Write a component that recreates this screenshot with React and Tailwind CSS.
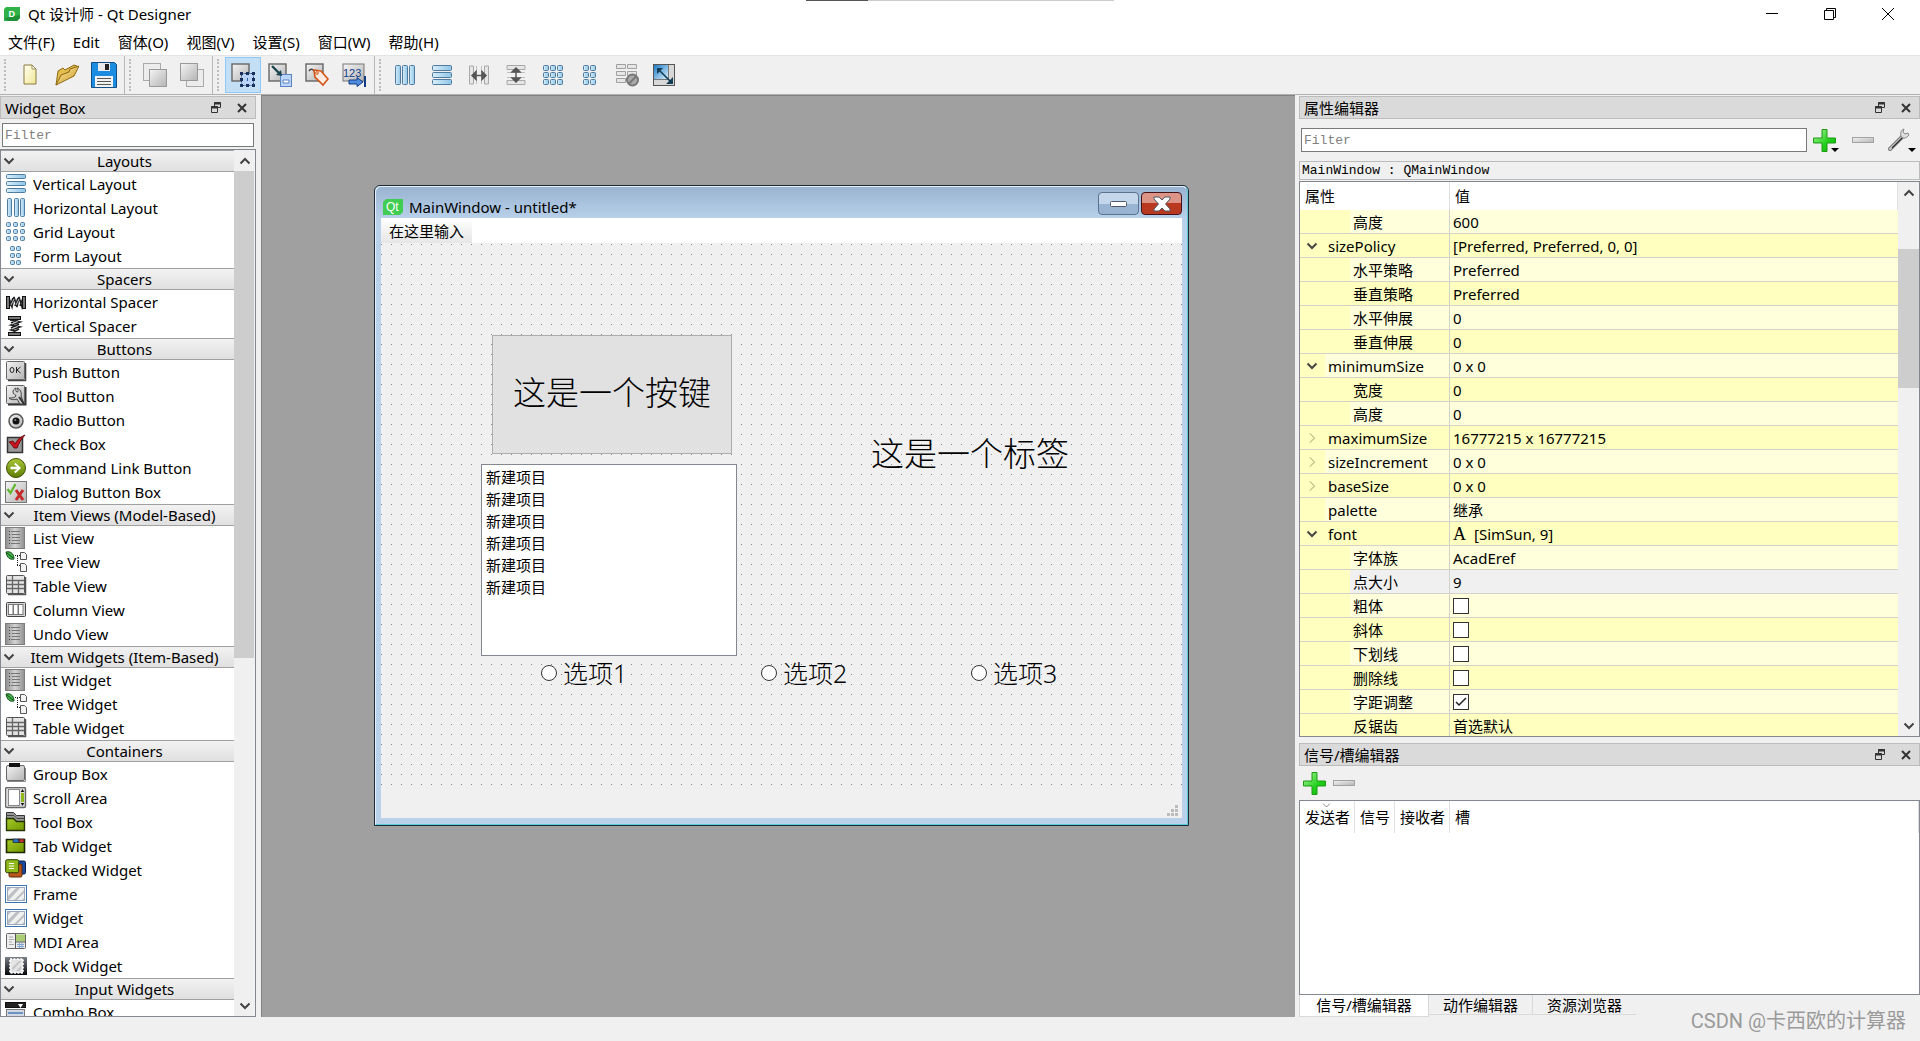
import React, { useState } from 'react';

const menus = ['文件(F)', 'Edit', '窗体(O)', '视图(V)', '设置(S)', '窗口(W)', '帮助(H)'];

const widgetGroups = [
    {
        title: 'Layouts',
        items: [
            ['vlayout', 'Vertical Layout'],
            ['hlayout', 'Horizontal Layout'],
            ['grid', 'Grid Layout'],
            ['form', 'Form Layout'],
        ],
    },
    {
        title: 'Spacers',
        items: [
            ['hspacer', 'Horizontal Spacer'],
            ['vspacer', 'Vertical Spacer'],
        ],
    },
    {
        title: 'Buttons',
        items: [
            ['push', 'Push Button'],
            ['tool', 'Tool Button'],
            ['radio', 'Radio Button'],
            ['check', 'Check Box'],
            ['command', 'Command Link Button'],
            ['dialog', 'Dialog Button Box'],
        ],
    },
    {
        title: 'Item Views (Model-Based)',
        items: [
            ['list', 'List View'],
            ['tree', 'Tree View'],
            ['table', 'Table View'],
            ['column', 'Column View'],
            ['list', 'Undo View'],
        ],
    },
    {
        title: 'Item Widgets (Item-Based)',
        items: [
            ['list', 'List Widget'],
            ['tree', 'Tree Widget'],
            ['table', 'Table Widget'],
        ],
    },
    {
        title: 'Containers',
        items: [
            ['group', 'Group Box'],
            ['scroll', 'Scroll Area'],
            ['toolbox', 'Tool Box'],
            ['tab', 'Tab Widget'],
            ['stacked', 'Stacked Widget'],
            ['frame', 'Frame'],
            ['frame', 'Widget'],
            ['mdi', 'MDI Area'],
            ['dock', 'Dock Widget'],
        ],
    },
    {
        title: 'Input Widgets',
        items: [['combo', 'Combo Box']],
    },
];

const properties = [
    { name: '高度', value: '600', child: true },
    { name: 'sizePolicy', value: '[Preferred, Preferred, 0, 0]', open: true },
    { name: '水平策略', value: 'Preferred', child: true },
    { name: '垂直策略', value: 'Preferred', child: true },
    { name: '水平伸展', value: '0', child: true },
    { name: '垂直伸展', value: '0', child: true },
    { name: 'minimumSize', value: '0 x 0', open: true },
    { name: '宽度', value: '0', child: true },
    { name: '高度', value: '0', child: true },
    { name: 'maximumSize', value: '16777215 x 16777215', open: false },
    { name: 'sizeIncrement', value: '0 x 0', open: false },
    { name: 'baseSize', value: '0 x 0', open: false },
    { name: 'palette', value: '继承' },
    { name: 'font', value: '[SimSun, 9]', open: true, font: true },
    { name: '字体族', value: 'AcadEref', child: true },
    { name: '点大小', value: '9', child: true, disabled: true },
    { name: '粗体', check: false, child: true },
    { name: '斜体', check: false, child: true },
    { name: '下划线', check: false, child: true },
    { name: '删除线', check: false, child: true },
    { name: '字距调整', check: true, child: true },
    { name: '反锯齿', value: '首选默认', child: true },
];

const Cells = ({ xs, ys, w = 5, h = 5 }) => (
    <g fill="url(#blue)" stroke="#4f7b9e">
        {ys.map((y) => xs.map((x) => <rect key={x + '-' + y} x={x} y={y} width={w} height={h} rx="1" />))}
    </g>
);

const ListIcon = (
    <>
        <rect x="0.5" y="0.5" width="19" height="21" fill="url(#greyH)" stroke="#7d7d7d" />
        <path d="M6 4.5h9M7 7.5h8M7 10.5h8M7 13.5h8M6 16.5h9" stroke="#777" />
        <path d="M4 4.5h1M4 7.5h1M4 10.5h1M4 13.5h1M4 16.5h1" stroke="#444" />
    </>
);

const icons = {
    vlayout: <Cells xs={[1.5]} ys={[1.5, 8.5, 15.5]} w={19} h={4} />,
    hlayout: <Cells xs={[2.5, 9.5, 15.5]} ys={[1.5]} w={4} h={18} />,
    grid: <Cells xs={[1.5, 8.5, 15.5]} ys={[1.5, 8.5, 15.5]} w={4} h={4} />,
    form: <Cells xs={[5.5, 11.5]} ys={[1.5, 8.5, 15.5]} w={4} h={4} />,
    hspacer: (
        <>
            <path d="M4 7l3 9 2-10 3 10 2-10 3 10 2-9M5 15l3-8M10 15l3-8M15 15l3-8" fill="none" stroke="#222" strokeWidth="1.6" />
            <path d="M6 14l3-6M11 14l3-6" stroke="#b8c4cc" />
            <rect x="1.5" y="5.5" width="3" height="12" fill="#777" stroke="#111" />
            <rect x="17.5" y="5.5" width="3" height="12" fill="#777" stroke="#111" />
        </>
    ),
    vspacer: (
        <>
            <path d="M5 5l10 2-9 3 9 2-9 3 9 3M14 4l-8 4M14 9l-8 4M14 14l-8 4" fill="none" stroke="#222" strokeWidth="1.6" />
            <path d="M13 6l-6 3M13 11l-6 3" stroke="#b8c4cc" />
            <rect x="3.5" y="1.5" width="12" height="3" fill="#777" stroke="#111" />
            <rect x="3.5" y="17.5" width="12" height="3" fill="#777" stroke="#111" />
        </>
    ),
    push: (
        <>
            <path d="M3 19.5h17.5V2" fill="none" stroke="#444" strokeWidth="1.6" />
            <rect x="1.5" y="0.5" width="18" height="18" rx="1" fill="url(#grey)" stroke="#666" />
            <ellipse cx="7" cy="9" rx="2" ry="2.5" fill="none" stroke="#222" />
            <path d="M11.5 6v6M15.5 6l-3.5 3 3.5 3" fill="none" stroke="#222" />
        </>
    ),
    tool: (
        <>
            <path d="M3 19.5h17.5V2" fill="none" stroke="#333" strokeWidth="2" />
            <rect x="1.5" y="0.5" width="18" height="18" rx="1" fill="url(#grey)" stroke="#666" />
            <path d="M12 3c3 1 5 4 4 8l3 8h-4l-3-5c-3 1-6 1-8-1 3 0 6 0 7-2 0-2-3-1-3-4 0-2 1-3 3-4 0 2-1 3 1 4 2 0 1-2 0-4z" fill="#d2d2d2" stroke="#444" />
            <path d="M14 12l5 7" stroke="#333" strokeWidth="2" />
        </>
    ),
    radio: (
        <>
            <circle cx="11" cy="12" r="7" fill="url(#grey)" stroke="#555" strokeWidth="1.5" />
            <circle cx="11" cy="12" r="3.5" fill="#111" />
            <circle cx="10.3" cy="11" r="1" fill="#889" />
        </>
    ),
    check: (
        <>
            <rect x="2.5" y="4.5" width="15" height="15" fill="#999" stroke="#333" strokeWidth="1.5" />
            <path d="M4 9l4-1 2 3c2-4 5-7 10-9-4 4-6 8-8 13H9c-1-2-3-4-5-6z" fill="#cc1420" stroke="#720d12" />
        </>
    ),
    command: (
        <>
            <circle cx="11" cy="11" r="9.5" fill="url(#olive)" stroke="#3f5200" />
            <path d="M5.5 9.8h6.500L9 7.300l1.500-1.500 5.500 5.200-5.500 5.200L9 14.700l3-2.500H5.500z" fill="#fff" />
        </>
    ),
    dialog: (
        <>
            <rect x="0.5" y="0.5" width="21" height="21" fill="url(#grey)" stroke="#777" />
            <path d="M2.5 8l3 4 5-9" fill="none" stroke="#61b82c" strokeWidth="2.2" />
            <path d="M11 9l7 10M18 9l-7 10" stroke="#c52a2a" strokeWidth="3" />
        </>
    ),
    list: ListIcon,
    tree: (
        <>
            <path d="M1 1c4-1 8 1 8 7-4 1-7-1-8-7z" fill="#43b04a" stroke="#164f1c" />
            <path d="M2 2l6 5" stroke="#164f1c" />
            <path d="M10 4.5h5M12.5 5v10M12 14.5h3" stroke="#222" strokeDasharray="1 1" fill="none" />
            <path d="M15.5 1.5h4l2 2v5h-6zM15.5 12.5h4l2 2v6h-6z" fill="#f4f4f4" stroke="#555" />
        </>
    ),
    table: (
        <>
            <path d="M3 19.5h17.5V2" fill="none" stroke="#555" strokeWidth="1.5" />
            <rect x="1.5" y="0.5" width="18" height="18" rx="1" fill="#e4e4e4" stroke="#555" />
            <path d="M2 5.5h17M2 9.5h17M2 13.5h17M7.5 1v17M13.5 6v12" stroke="#666" strokeWidth="1.3" />
        </>
    ),
    column: (
        <>
            <rect x="1.5" y="3.5" width="19" height="14" rx="1" fill="#d6d6d6" stroke="#444" />
            <rect x="3.5" y="5.5" width="4.5" height="10" fill="#fff" stroke="#777" />
            <rect x="8.5" y="5.5" width="4.5" height="10" fill="#fff" stroke="#777" />
            <rect x="13.5" y="5.5" width="4.5" height="10" fill="#fff" stroke="#777" />
        </>
    ),
    group: (
        <>
            <rect x="1.5" y="2.5" width="18" height="15" rx="1.5" fill="url(#grey)" stroke="#666" />
            <path d="M2 18.5h18.5V5" fill="none" stroke="#888" />
            <rect x="4" y="0" width="11" height="4" fill="#111" />
        </>
    ),
    scroll: (
        <>
            <rect x="0.5" y="0.5" width="20" height="20" rx="1.5" fill="#ddd" stroke="#666" strokeWidth="1.4" />
            <rect x="3.5" y="2.5" width="11" height="16" fill="#fff" stroke="#888" />
            <rect x="16" y="6" width="3" height="9" fill="#8fb81c" />
            <path d="M15.8 5L17.5 2 19.2 5zM15.8 16l1.7 3 1.7-3z" fill="#111" />
        </>
    ),
    toolbox: (
        <>
            <path d="M1.5 19.5V1.500h7l3 3h8v15z" fill="#999" stroke="#333" />
            <path d="M2 4.5h7l3 3h7" fill="none" stroke="#444" />
            <path d="M1.5 19.5v-12h7l3 3h8v9z" fill="url(#lime)" stroke="#253300" strokeWidth="1.4" />
        </>
    ),
    tab: (
        <>
            <path d="M1.5 4.5h18v13h-18z" fill="url(#lime)" stroke="#1d2800" strokeWidth="1.6" />
            <rect x="8" y="4" width="6" height="3.5" fill="#2b71c7" stroke="#111" strokeWidth="0.6" />
            <rect x="14" y="4" width="5" height="3.5" fill="#b33" stroke="#111" strokeWidth="0.6" />
        </>
    ),
    stacked: (
        <>
            <rect x="9" y="2" width="11.5" height="13" rx="1.5" fill="#174aa0" stroke="#0c1b44" />
            <rect x="4" y="5" width="13" height="13" rx="1.5" fill="#b9561a" stroke="#5b2506" />
            <rect x="0.7" y="0.7" width="13" height="13" rx="1.5" fill="#8fb81c" stroke="#2e3d00" />
            <path d="M4 4.5h5M4 7h5M4 9.5h5" stroke="#fff" />
        </>
    ),
    frame: (
        <>
            <rect x="0.5" y="2.5" width="21" height="17" fill="#fff" stroke="#3c74b0" />
            <rect x="2.5" y="4.5" width="17" height="13" fill="#f1f1f1" stroke="#9ab" />
            <path d="M3 13l8-8h4L4 17H3zM9 17L19 7v3l-7 7zM3 8l3-3H3zM17 17l2-2v2z" fill="#bcbfc3" />
        </>
    ),
    mdi: (
        <>
            <rect x="1.5" y="2.5" width="19" height="15" rx="1" fill="#eee" stroke="#666" />
            <rect x="11" y="3.5" width="9" height="7" fill="#a9cc75" />
            <path d="M4 6h4M4 8.5h5M4 11h3M4 13.5h5" stroke="#aaa" />
            <path d="M10.5 3v14M10.5 11h10" stroke="#555" />
            <path d="M12 13.5h7M12 15.5h7M14.5 12v5M17 12v5" stroke="#7fa5d0" />
        </>
    ),
    dock: (
        <>
            <rect width="22" height="18" y="2" fill="url(#dark)" />
            <rect x="5" y="4" width="13" height="14" fill="#e4e4e4" stroke="#fff" strokeWidth="1.6" strokeDasharray="2 1.4" />
            <path d="M7 13l7-7h2l-8 9zM11 16l5-5v3l-2 2z" fill="#c2c2c2" />
        </>
    ),
    combo: (
        <>
            <rect x="0.5" y="1.5" width="20" height="5" fill="#222" stroke="#111" />
            <path d="M13 3h5l-2.5 4z" fill="#fff" />
            <rect x="1.5" y="8.5" width="18" height="12" fill="#cfd8e4" stroke="#777" />
            <path d="M3 12h15M3 16h15" stroke="#6d92bf" strokeWidth="2" />
        </>
    ),

    newForm: (
        <>
            <path d="M6 2h8l4 4v15H6z" fill="url(#paper)" stroke="#8a7b3c" />
            <path d="M14 2v4h4z" fill="#fff" stroke="#8a7b3c" strokeWidth="0.8" />
        </>
    ),
    open: (
        <>
            <path d="M1 22L3 8l5-3 2 2 9-5 3 1-1 5z" fill="#e3bd4d" stroke="#8f6a14" />
            <path d="M4 16L19 4l2 1-2 8z" fill="#fdf6cf" stroke="#a5812c" strokeWidth="0.7" />
            <path d="M1 22l5-10 8-3 1-3 9-3-5 10z" fill="url(#folder)" stroke="#8f6a14" />
        </>
    ),
    save: (
        <>
            <path d="M0.5 0.5h23l2 2v23h-25z" fill="#1b8ce0" stroke="#0f4f86" />
            <path d="M7 1h12v8H7z" fill="#e8eaec" />
            <rect x="14" y="2" width="4" height="6" fill="#222" />
            <path d="M4 14h18v11H4z" fill="#f2f2f2" />
            <path d="M6 16.5h14M6 19.5h14M6 22.5h14" stroke="#555" />
        </>
    ),
    raise: (
        <g stroke="#a9a9a9">
            <rect x="0.5" y="0.5" width="17" height="17" fill="#ececec" />
            <rect x="6.5" y="6.5" width="17" height="17" fill="url(#grey)" stroke="#999" />
        </g>
    ),
    lower: (
        <g stroke="#a9a9a9">
            <rect x="6.5" y="6.5" width="17" height="17" fill="#ececec" />
            <rect x="0.5" y="0.5" width="17" height="17" fill="url(#grey)" stroke="#999" />
        </g>
    ),
    editWidgets: (
        <>
            <rect x="1" y="1" width="17" height="17" fill="url(#grey)" stroke="#666" strokeWidth="1.4" />
            <rect x="10.5" y="10.5" width="12" height="12" fill="#b9d2f5" stroke="#2c4a80" strokeDasharray="2 1" />
            <path d="M9 9h3v3H9zM15 9h3v3h-3zM21 9h3v3h-3zM9 15h3v3H9zM21 15h3v3h-3zM9 21h3v3H9zM15 21h3v3h-3zM21 21h3v3h-3z" fill="#17305e" />
            <path d="M16 15h1v3h-1z" fill="#2c5fc0" />
        </>
    ),
    editSignals: (
        <>
            <rect x="1" y="1" width="17" height="17" fill="url(#grey)" stroke="#666" strokeWidth="1.4" />
            <rect x="12.5" y="11.5" width="11" height="12" fill="#bcd5fa" stroke="#5a82c0" />
            <path d="M15 17h6v3h-6z" fill="#fff" stroke="#5a82c0" />
            <path d="M4 3l8 8" stroke="#1c4550" strokeWidth="2.4" />
            <path d="M14 13l-6-1 5-5z" fill="#1c4550" />
        </>
    ),
    editBuddies: (
        <>
            <rect x="1" y="1" width="17" height="17" fill="url(#grey)" stroke="#666" strokeWidth="1.4" />
            <path d="M4 8c2-3 4-2 7 2" stroke="#444" fill="none" strokeWidth="1.5" />
            <path d="M9 7l7 1 7 8-5 6-8-8z" fill="#fbeadd" stroke="#d25417" strokeWidth="1.6" />
            <circle cx="12" cy="10" r="1.3" fill="#fff" stroke="#d25417" />
        </>
    ),
    editTabs: (
        <>
            <rect x="1" y="1" width="21" height="17" fill="url(#grey)" stroke="#777" />
            <text x="1" y="14" fontSize="11" fill="#12408a" fontFamily="Liberation Sans">123</text>
            <path d="M7 17h8v-2.500l6 4.500-6 4.500V21H7z" fill="#4e8ce0" stroke="#123c86" />
            <path d="M23 13v11" stroke="#123c86" strokeWidth="2" />
        </>
    ),
    layoutH: <Cells xs={[2.5, 9.5, 16.5]} ys={[2.5]} h={19} />,
    layoutV: <Cells xs={[2.5]} ys={[2.5, 9.5, 16.5]} w={19} />,
    splitH: (
        <>
            <path d="M2.5 3h4v18h-4zM17.5 3h4v18h-4z" fill="#e6e6e6" stroke="#a8a8a8" />
            <path d="M9.5 3v18M14.5 3v18" stroke="#c0c0c0" />
            <path d="M5 12.5h14M5 12.5l4-4v8zM19 12.5l-4-4v8z" fill="#555" stroke="#555" strokeWidth="1.5" />
        </>
    ),
    splitV: (
        <>
            <path d="M3 2.5h18v4H3zM3 17.5h18v4H3z" fill="#e6e6e6" stroke="#a8a8a8" />
            <path d="M3 9.5h18M3 14.5h18" stroke="#c0c0c0" />
            <path d="M12 5v14M12 5L8 9h8zM12 19l-4-4h8z" fill="#555" stroke="#555" strokeWidth="1.5" />
        </>
    ),
    layoutGrid: <Cells xs={[2.5, 9.5, 16.5]} ys={[2.5, 9.5, 16.5]} />,
    layoutForm: <Cells xs={[5.5, 12.5]} ys={[2.5, 9.5, 16.5]} />,
    breakLayout: (
        <>
            <path d="M1.5 1.5h9v4h-9zM12.5 1.5h9v4h-9zM1.5 8.5h9v4h-9zM12.5 8.5h9v4h-9zM1.5 15.5h9v4h-9z" fill="#e6e6e6" stroke="#a0a0a0" />
            <circle cx="17.5" cy="17" r="5.5" fill="#aaa" stroke="#777" strokeWidth="2" />
            <path d="M14 20.5l7-7" stroke="#777" strokeWidth="2" />
        </>
    ),
    adjust: (
        <>
            <rect x="1.5" y="1.5" width="21" height="21" fill="#d8d8d8" stroke="#555" />
            <rect x="2" y="2" width="14" height="14" fill="url(#adjustFill)" />
            <path d="M16.5 2v14.5H2" fill="none" stroke="#777" />
            <path d="M6 6l12 12" stroke="#123d54" strokeWidth="1.600" />
            <path d="M5 5h6l-6 6zM21 21h-7l7-7z" fill="#123d54" />
        </>
    ),
    plus: (
        <path d="M9 0.5h5V9h8.500v5H14v8.500H9V14H0.5V9H9z" fill="url(#green)" stroke="#1e9a14" />
    ),
    minus: <rect x="1.5" y="9.5" width="21" height="5" fill="url(#grey)" stroke="#a2a2a2" />,
    wrench: (
        <>
            <path d="M3 21L15 9" stroke="#777" strokeWidth="4" strokeLinecap="round" />
            <path d="M3 21L15 9" stroke="#ccc" strokeWidth="2" strokeLinecap="round" />
            <path d="M5 20L16 9" stroke="#333" strokeWidth="1.3" />
            <path d="M17 1c-3 1-4 4-3 7s5 3 8-1l-1-2-3 1-2-2z" fill="#ddd" stroke="#888" />
        </>
    ),
};

const Icon = ({ name, size = 22, className = '' }) => (
    <svg width={size} height={size} viewBox={`0 0 ${size} ${size}`} className={`shrink-0 ${className}`} fill="none" aria-hidden="true">
        {icons[name]}
    </svg>
);

// shared gradients, referenced by id from every icon
const Gradients = () => (
    <svg width="0" height="0" className="absolute" aria-hidden="true">
        <defs>
            <linearGradient id="blue" x2="1" y2="0"><stop stopColor="#d9eefa" /><stop offset="1" stopColor="#8fc6e8" /></linearGradient>
            <linearGradient id="grey" x2="1" y2="1"><stop stopColor="#f4f4f4" /><stop offset="1" stopColor="#b4b4b4" /></linearGradient>
            <linearGradient id="greyH" x2="1" y2="0"><stop stopColor="#8c8c8c" /><stop offset=".5" stopColor="#d4d4d4" /><stop offset="1" stopColor="#8f8f8f" /></linearGradient>
            <linearGradient id="olive" x2="0" y2="1"><stop stopColor="#a9c637" /><stop offset="1" stopColor="#5f7d06" /></linearGradient>
            <linearGradient id="lime" x2="1" y2="1"><stop stopColor="#a6c92a" /><stop offset="1" stopColor="#6f9800" /></linearGradient>
            <linearGradient id="dark" x2="0" y2="1"><stop stopColor="#7a8089" /><stop offset="1" stopColor="#050709" /></linearGradient>
            <linearGradient id="paper" x2="1" y2="1"><stop stopColor="#fffef2" /><stop offset="1" stopColor="#f1e694" /></linearGradient>
            <linearGradient id="folder" x2="1" y2="1"><stop stopColor="#fbe79c" /><stop offset="1" stopColor="#cf9b2b" /></linearGradient>
            <linearGradient id="green" x2="1" y2="1"><stop stopColor="#b4f5a0" /><stop offset=".6" stopColor="#1fd01a" /><stop offset="1" stopColor="#0cae0c" /></linearGradient>
            <linearGradient id="adjustFill" x2="1" y2="1"><stop stopColor="#1c7cc4" /><stop offset="1" stopColor="#d8eefc" /></linearGradient>
        </defs>
    </svg>
);

const Chevron = ({ dir = 'down', className = '', color = '#444', size = 12, stroke = 2 }) => {
    const paths = { down: 'M1.5 3.5L6 8l4.5-4.5', up: 'M1.5 8.5L6 4l4.5 4.5', right: 'M4 1.5L8.5 6 4 10.5' };
    return (
        <svg width={size} height={size} viewBox="0 0 12 12" className={`shrink-0 ${className}`} aria-hidden="true">
            <path d={paths[dir]} fill="none" stroke={color} strokeWidth={stroke} />
        </svg>
    );
};

const ToolButton = ({ icon, size = 24, label, active }) => (
    <button
        type="button"
        aria-label={label}
        className={`w-9 h-9 flex items-center justify-center border ${active ? 'bg-[#c2dff5] border-[#90c8f6]' : 'border-transparent'}`}
    >
        <Icon name={icon} size={size} />
    </button>
);

const ToolGroup = ({ children, last }) => (
    <div className={`flex items-center gap-px pl-1 pr-0.5 ${last ? '' : 'border-r border-[#b8b8b8]'}`}>
        <div className="w-0 h-8 border-l-2 border-dotted border-[#bdbdbd] mr-[5px]"></div>
        {children}
    </div>
);

const DockTitle = ({ title }) => (
    <div className="h-[23px] shrink-0 flex items-center pl-1 pr-2 bg-[#dadada] border border-[#bcbcbc]">
        <h2 className="flex-1">{title}</h2>
        <button type="button" aria-label="Float" className="mr-4">
            <svg width="10" height="11" viewBox="0 0 10 11" fill="none">
                <path d="M3.5 4V.5h6v5H7" stroke="#333" />
                <path d="M3 1.5h7" stroke="#333" strokeWidth="2" />
                <path d="M.5 4.5h6v6h-6z" stroke="#333" />
                <path d="M0 5.5h7" stroke="#333" strokeWidth="2" />
            </svg>
        </button>
        <button type="button" aria-label="Close">
            <svg width="10" height="10" viewBox="0 0 10 10">
                <path d="M1 1l8 8M9 1L1 9" stroke="#333" strokeWidth="2" />
            </svg>
        </button>
    </div>
);

const ScrollBar = ({ children }) => (
    <div className="w-[21px] shrink-0 flex flex-col bg-[#f0f0f0]">
        <button type="button" aria-label="Scroll up" className="h-[21px] flex items-center justify-center">
            <Chevron dir="up" />
        </button>
        <div className="flex-1">{children}</div>
        <button type="button" aria-label="Scroll down" className="h-5 flex items-center justify-center">
            <Chevron />
        </button>
    </div>
);

const TitleBar = () => (
    <div className="h-7 flex items-center pl-1 relative">
        <svg width="16" height="16" viewBox="0 0 16 16" aria-hidden="true">
            <path d="M2 1h14v11l-3 3H0V3z" fill="#2fb348" />
            <path d="M0 12l4 3h9l3-3v-3z" fill="#1f9139" />
            <text x="4.5" y="11" fontSize="9" fontWeight="700" fill="#fff" fontFamily="Liberation Sans">D</text>
        </svg>
        <h1 className="ml-2 flex-1">Qt 设计师 - Qt Designer</h1>
        <div className="absolute top-0 left-[42%] w-[16%] h-px flex">
            <div className="w-1/5 bg-[#555]"></div>
            <div className="flex-1 bg-[#ccc]"></div>
        </div>
        <div className="flex gap-3 pr-[9px]">
            <button type="button" aria-label="Minimize" className="w-[46px] h-7 flex items-center justify-center">
                <svg width="12" height="12"><path d="M0 5.5h12" stroke="#000" /></svg>
            </button>
            <button type="button" aria-label="Restore" className="w-[46px] h-7 flex items-center justify-center">
                <svg width="12" height="12" fill="none" stroke="#000"><path d="M.5 2.5h9v9h-9zM2.5 2.5v-2h9v9h-2" /></svg>
            </button>
            <button type="button" aria-label="Close" className="w-[46px] h-7 flex items-center justify-center">
                <svg width="12" height="12"><path d="M0 0l12 12M12 0L0 12" stroke="#000" /></svg>
            </button>
        </div>
    </div>
);

const Toolbar = () => (
    <div className="h-10 shrink-0 flex border-t border-b border-t-[#e4e4e4] border-b-[#b0b0b0]">
        <ToolGroup>
            <ToolButton icon="newForm" label="New" />
            <ToolButton icon="open" label="Open" />
            <ToolButton icon="save" label="Save" size={26} />
        </ToolGroup>
        <ToolGroup>
            <ToolButton icon="raise" label="Bring to front" />
            <ToolButton icon="lower" label="Send to back" />
        </ToolGroup>
        <ToolGroup>
            <ToolButton icon="editWidgets" label="Edit widgets" active />
            <ToolButton icon="editSignals" label="Edit signals and slots" />
            <ToolButton icon="editBuddies" label="Edit buddies" />
            <ToolButton icon="editTabs" label="Edit tab order" />
        </ToolGroup>
        <ToolGroup last>
            <ToolButton icon="layoutH" label="Lay out horizontally" />
            <ToolButton icon="layoutV" label="Lay out vertically" />
            <ToolButton icon="splitH" label="Horizontal splitter" />
            <ToolButton icon="splitV" label="Vertical splitter" />
            <ToolButton icon="layoutGrid" label="Lay out in a grid" />
            <ToolButton icon="layoutForm" label="Lay out in a form" />
            <ToolButton icon="breakLayout" label="Break layout" />
            <ToolButton icon="adjust" label="Adjust size" />
        </ToolGroup>
    </div>
);

const WidgetBox = () => {
    const [closed, setClosed] = useState({});

    return (
        <aside className="w-64 shrink-0 flex flex-col">
            <DockTitle title="Widget Box" />
            <div className="px-0.5 pt-1 pb-0.5">
                <input
                    type="text"
                    aria-label="Filter widgets"
                    placeholder="Filter"
                    className="block w-full h-6 px-0.5 bg-white border border-[#7a7a7a] placeholder:text-[#808080] font-['Liberation_Mono',monospace] text-[13px]"
                />
            </div>
            <div className="flex-1 min-h-0 flex bg-white border border-[#828790]">
                <div className="flex-1 overflow-hidden">
                    {widgetGroups.map((group) => (
                        <section key={group.title}>
                            <button
                                type="button"
                                onClick={() => setClosed({ ...closed, [group.title]: !closed[group.title] })}
                                className="w-full h-[22px] flex items-center pl-0.5 bg-linear-to-b from-[#f2f2f2] to-[#e0e0e0] border-t border-b border-[#a0a0a0]"
                            >
                                <Chevron dir={closed[group.title] ? 'right' : 'down'} />
                                <span className="flex-1 text-center whitespace-nowrap">{group.title}</span>
                            </button>
                            {!closed[group.title] && (
                                <ul>
                                    {group.items.map(([icon, name]) => (
                                        <li key={name} className="h-6 flex items-center gap-1.5 pl-1 whitespace-nowrap">
                                            <Icon name={icon} />
                                            <span>{name}</span>
                                        </li>
                                    ))}
                                </ul>
                            )}
                        </section>
                    ))}
                </div>
                <ScrollBar>
                    <div className="h-[59%] mr-px bg-[#cdcdcd]"></div>
                </ScrollBar>
            </div>
        </aside>
    );
};

const RadioOption = ({ label, className }) => (
    <label className={`absolute flex items-center gap-1.5 text-[25px] leading-8 font-light ${className}`}>
        <input type="radio" name="option" className="appearance-none w-4 h-4 rounded-full bg-white border border-[#333] checked:border-4" />
        {label}
    </label>
);

const FormWindow = () => (
    <div className="absolute left-28 top-[89px] w-[815px] border border-[#1d2b36] rounded-t-md bg-[#b9d1ea]">
        <div className="border-l border-t border-r border-b border-t-[#e6f0fa] border-l-[#e6f0fa] border-r-[#5cc9d6] border-b-[#5cc9d6] rounded-t-md px-[5px] pb-1.5 bg-linear-to-b from-[#99b4d1] to-[#b9d1ea] to-[32px]">
            <div className="h-[31px] flex items-start">
                <svg width="20" height="16" viewBox="0 0 20 16" className="mt-3 ml-0.5" aria-hidden="true">
                    <path d="M3 0h17v13l-3 3H0V3z" fill="#41cd52" />
                    <text x="3" y="12" fontSize="12" fill="#fff" fontFamily="Liberation Sans">Qt</text>
                </svg>
                <span className="flex-1 ml-1.5 mt-2.5">MainWindow - untitled*</span>
                <button type="button" aria-label="Minimize form" className="mt-[5px] w-[41px] h-[23px] flex items-center justify-center border border-[#5a7391] rounded-sm bg-linear-to-b from-[#c3d6ea] from-50% to-[#98b4d2] to-50%">
                    <svg width="17" height="6"><rect x=".5" y=".5" width="16" height="5" rx="1" fill="#fff" stroke="#535666" /></svg>
                </button>
                <button type="button" aria-label="Close form" className="mt-[5px] ml-0.5 w-[41px] h-[23px] flex items-center justify-center border border-[#42131a] rounded-sm bg-linear-to-b from-[#dc9487] from-45% to-[#b8391f] to-50%">
                    <svg width="18" height="16" viewBox="0 0 18 16">
                        <path d="M1 1h5l3 3 3-3h5v2l-4.5 5 4.5 5v2h-5l-3-3-3 3H1v-2l4.5-5L1 3z" fill="#fff" stroke="#535666" />
                    </svg>
                </button>
            </div>
            <div className="h-[25px] flex bg-white">
                <button type="button" className="px-2 bg-linear-to-b from-white to-[#e6e6e6]">在这里输入</button>
            </div>
            <div className="relative h-[575px] bg-[#f0f0f0]">
                <svg width="100%" height="545" className="block" aria-hidden="true">
                    <defs>
                        <pattern id="dots" width="10" height="10" patternUnits="userSpaceOnUse">
                            <rect x="0" y="1" width="1" height="1" fill="#888" />
                        </pattern>
                    </defs>
                    <rect width="100%" height="545" fill="url(#dots)" />
                </svg>
                <button type="button" className="absolute left-[111px] top-[92px] w-60 h-[119px] pb-1 bg-[#e1e1e1] border border-[#adadad] text-[33px] font-light">
                    这是一个按键
                </button>
                <ul className="absolute left-[100px] top-[221px] w-64 h-48 px-1 py-px bg-white border border-[#828790] leading-[22px]">
                    {[1, 2, 3, 4, 5, 6].map((n) => (
                        <li key={n}>新建项目</li>
                    ))}
                </ul>
                <p className="absolute left-[490px] top-[187px] text-[33px] leading-12 font-light">这是一个标签</p>
                <RadioOption label="选项1" className="left-[160px] top-[414px]" />
                <RadioOption label="选项2" className="left-[380px] top-[414px]" />
                <RadioOption label="选项3" className="left-[590px] top-[414px]" />
                <svg width="11" height="11" className="absolute right-1 bottom-0.5" fill="#bcbcbc" aria-hidden="true">
                    <path d="M8 0h3v3H8zM8 4h3v3H8zM4 4h3v3H4zM8 8h3v3H8zM4 8h3v3H4zM0 8h3v3H0z" />
                </svg>
            </div>
        </div>
    </div>
);

const PropertyValue = ({ prop }) => {
    const [checked, setChecked] = useState(prop.check);

    if (prop.check !== undefined) {
        return (
            <div className="relative w-4 h-4">
                <input
                    type="checkbox"
                    aria-label={prop.name}
                    checked={checked}
                    onChange={(e) => setChecked(e.target.checked)}
                    className="block appearance-none w-4 h-4 bg-white border border-[#333]"
                />
                {checked && (
                    <svg width="16" height="16" className="absolute inset-0 pointer-events-none">
                        <path d="M3 8l3 3 7-7" fill="none" stroke="#222" strokeWidth="1.5" />
                    </svg>
                )}
            </div>
        );
    }

    return (
        <div className="flex items-center">
            {prop.font && <span className="font-['Liberation_Serif',serif] text-lg leading-5 mr-2">A</span>}
            {prop.value}
        </div>
    );
};

const PropertyRow = ({ prop, index }) => {
    let bg = index % 2 ? 'bg-[#ffffbf]' : 'bg-[#ffffdc]';
    if (prop.disabled) bg = 'bg-[#f0f0f0]';

    return (
        <tr className="h-6">
            <td className="p-0 border-b border-r border-[#d2d2c8] bg-[#ffffbf]">
                <div className="flex h-[23px]">
                    <div className={`shrink-0 flex items-center pl-1.5 ${prop.child ? 'w-[50px]' : 'w-[25px]'}`}>
                        {prop.open !== undefined && (
                            <Chevron dir={prop.open ? 'down' : 'right'} color={prop.open ? '#444' : '#999966'} stroke={prop.open ? 2 : 1} />
                        )}
                    </div>
                    <div className={`flex-1 flex items-center pl-[3px] ${bg}`}>{prop.name}</div>
                </div>
            </td>
            <td className={`p-0 pl-[3px] border-b border-[#d2d2c8] ${bg}`}>
                <PropertyValue prop={prop} />
            </td>
        </tr>
    );
};

const DropMark = () => (
    <svg width="8" height="4" className="absolute right-1 bottom-1"><path d="M0 0h8L4 4z" fill="#000" /></svg>
);

const PropertyEditor = () => (
    <section className="flex-1 min-h-0 flex flex-col">
        <DockTitle title="属性编辑器" />
        <div className="h-[42px] shrink-0 flex items-center pl-0.5 gap-1.5">
            <input
                type="text"
                aria-label="Filter properties"
                placeholder="Filter"
                className="flex-1 h-6 px-0.5 bg-white border border-[#7a7a7a] placeholder:text-[#808080] font-['Liberation_Mono',monospace] text-[13px]"
            />
            <button type="button" aria-label="Add property" className="relative w-[30px] h-8 flex items-center"><Icon name="plus" size={23} /><DropMark /></button>
            <button type="button" aria-label="Remove property" className="w-7 h-8 flex items-center justify-center"><Icon name="minus" size={24} /></button>
            <button type="button" aria-label="Configure" className="relative w-[37px] pr-1.5 h-8 flex items-center justify-center"><Icon name="wrench" size={24} /><DropMark /></button>
        </div>
        <div className="h-[19px] shrink-0 flex items-center pl-0.5 mb-px border border-[#bcbcbc] font-['Liberation_Mono',monospace] text-[13px] whitespace-pre">
            MainWindow : QMainWindow
        </div>
        <div className="flex-1 min-h-0 flex bg-white border border-[#828790]">
            <div className="flex-1 overflow-hidden">
                <table className="w-full table-fixed border-separate border-spacing-0">
                    <thead>
                        <tr className="h-7">
                            <th className="w-[150px] p-0 pl-[5px] text-left font-normal border-r border-[#e0e0e0]">属性</th>
                            <th className="p-0 pl-[5px] text-left font-normal border-r border-[#e0e0e0]">值</th>
                        </tr>
                    </thead>
                    <tbody>
                        {properties.map((prop, i) => (
                            <PropertyRow key={i} prop={prop} index={i} />
                        ))}
                    </tbody>
                </table>
            </div>
            <ScrollBar>
                <div className="h-[9%]"></div>
                <div className="h-[27%] bg-[#cdcdcd]"></div>
            </ScrollBar>
        </div>
    </section>
);

const SignalEditor = () => (
    <section className="h-[274px] shrink-0 flex flex-col mt-1.5">
        <DockTitle title="信号/槽编辑器" />
        <div className="h-[34px] shrink-0 flex items-center gap-1.5 pl-1">
            <button type="button" aria-label="Add connection"><Icon name="plus" size={23} /></button>
            <button type="button" aria-label="Remove connection"><Icon name="minus" size={24} /></button>
        </div>
        <div className="flex-1 bg-white border border-[#828790]">
            <table className="w-full table-fixed border-separate border-spacing-0">
                <thead>
                    <tr className="h-8 text-left">
                        <th className="relative w-[55px] p-0 pl-[5px] font-normal border-r border-[#e0e0e0]">
                            <Chevron className="absolute top-0 left-[22px]" size={9} stroke={1} color="#666" />
                            发送者
                        </th>
                        <th className="w-10 p-0 pl-[5px] font-normal border-r border-[#e0e0e0]">信号</th>
                        <th className="w-[55px] p-0 pl-[5px] font-normal border-r border-[#e0e0e0]">接收者</th>
                        <th className="p-0 pl-[5px] font-normal border-r border-[#e0e0e0]">槽</th>
                    </tr>
                </thead>
            </table>
        </div>
        <div className="h-[22px] shrink-0 flex items-start">
            <button type="button" className="w-[130px] h-[22px] pb-0.5 bg-white border border-t-0 border-[#d9d9d9]">信号/槽编辑器</button>
            <button type="button" className="w-[104px] h-5 pb-0.5 border-b border-r border-[#d9d9d9]">动作编辑器</button>
            <button type="button" className="w-[103px] h-5 pb-0.5 border-b border-[#d9d9d9]">资源浏览器</button>
        </div>
    </section>
);

const App = () => {
    return (
        <div className="h-screen flex flex-col overflow-hidden bg-[#f0f0f0] text-black text-[15px] leading-5 font-['Noto_Sans','Noto_Sans_CJK_SC',sans-serif]">
            <Gradients />
            <header className="shrink-0 bg-white">
                <TitleBar />
                <nav className="h-[27px] flex items-center gap-[18px] pl-2">
                    {menus.map((menu) => (
                        <button key={menu} type="button">{menu}</button>
                    ))}
                </nav>
            </header>
            <Toolbar />
            <main className="flex-1 min-h-0 flex">
                <div className="flex pt-px">
                    <WidgetBox />
                </div>
                <div className="relative flex-1 ml-[5px] mr-1 bg-[#a0a0a0] border-l border-t border-[#828282] overflow-hidden">
                    <FormWindow />
                </div>
                <div className="w-[621px] shrink-0 flex flex-col pt-px">
                    <PropertyEditor />
                    <SignalEditor />
                </div>
            </main>
            <footer className="h-6 shrink-0 relative">
                <span className="absolute right-3.5 bottom-1.5 text-xl leading-7 text-[#9a9a9a] font-['Roboto','Noto_Sans_CJK_SC',sans-serif] whitespace-nowrap">
                    CSDN @卡西欧的计算器
                </span>
            </footer>
        </div>
    );
};

export default App;
